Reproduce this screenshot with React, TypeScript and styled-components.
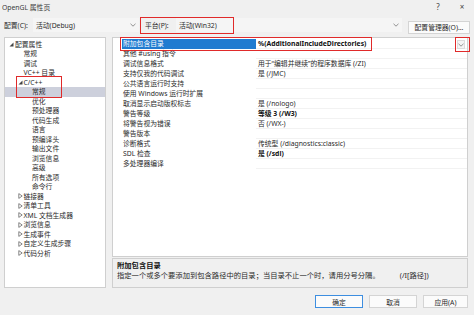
import styled, { createGlobalStyle } from "styled-components";

const GlobalStyle = createGlobalStyle`
  html, body { margin: 0; padding: 0; }
  body {
    background: #f0f0f0;
    font-family: "Noto Sans", "Noto Sans CJK SC", sans-serif;
  }
`;

const Window = styled.div`
  width: 474px;
  height: 315px;
  background: #f0f0f0;
  color: #2a2a2a;
  font-size: 6.8px;
  display: flex;
  flex-direction: column;
  overflow: hidden;
`;

const TitleBar = styled.div`
  height: 13px;
  display: flex;
  align-items: center;
  padding-left: 2px;
`;

const Title = styled.div`
  flex: 1;
  color: #3a3a3a;
`;

const TitleButton = styled.div`
  width: 24px;
  text-align: center;
  font-size: 8px;
  color: #444;
`;

const ConfigRow = styled.div`
  margin-top: 4px;
  height: 16px;
  display: flex;
  align-items: center;
  padding-left: 4px;
`;

const Label = styled.span<{ $w: number }>`
  width: ${(p) => p.$w}px;
  flex: none;
`;

const Combo = styled.div<{ $w: number }>`
  width: ${(p) => p.$w}px;
  height: 14px;
  box-sizing: border-box;
  display: flex;
  align-items: center;
  justify-content: space-between;
  padding: 0 3px;
  background: #f5f5f5;
  flex: none;
`;

const Chevron = styled.svg`
  width: 6px;
  height: 4px;
`;

const PlatformGroup = styled.div`
  position: relative;
  display: flex;
  align-items: center;
  padding-left: 5px;
  margin-left: 1px;
`;

const RedFrame = styled.div<{ $l: number; $t: number; $w: number; $h: number }>`
  position: absolute;
  left: ${(p) => p.$l}px;
  top: ${(p) => p.$t}px;
  width: ${(p) => p.$w}px;
  height: ${(p) => p.$h}px;
  border: 1.5px solid #e02a2a;
  box-sizing: border-box;
  pointer-events: none;
  z-index: 2;
`;

const ManagerButton = styled.div`
  margin-left: 6px;
  margin-top: 4px;
  width: 62px;
  height: 13px;
  box-sizing: border-box;
  border: 1px solid #d4d4d4;
  background: #fbfbfb;
  display: flex;
  align-items: center;
  justify-content: center;
`;

const Body = styled.div`
  margin-top: 4px;
  height: 251px;
  display: flex;
  gap: 6px;
  padding-left: 4px;
`;

const Tree = styled.div`
  width: 102px;
  box-sizing: border-box;
  border: 1px solid #cfcfcf;
  background: #fff;
  padding-top: 1.5px;
`;

const TreeItem = styled.div<{ $level: number; $selected?: boolean }>`
  position: relative;
  height: 9.5px;
  line-height: 9.5px;
  display: flex;
  align-items: center;
  padding-left: ${(p) => 4 + p.$level * 8.5}px;
  background: ${(p) => (p.$selected ? "#cdd0dc" : "transparent")};
  white-space: nowrap;
`;

const Expander = styled.span`
  width: 6px;
  flex: none;
  display: flex;
  align-items: center;
`;

const RightColumn = styled.div`
  width: 356px;
  display: flex;
  flex-direction: column;
  gap: 1px;
`;

const Grid = styled.div`
  height: 220px;
  box-sizing: border-box;
  border: 1px solid #cfcfcf;
  background: #fff;
  padding-top: 1px;
`;

const Row = styled.div`
  position: relative;
  height: 10px;
  line-height: 10px;
  display: grid;
  grid-template-columns: 134px 1fr;
  padding-left: 9px;
  white-space: nowrap;
`;

const NameCell = styled.div<{ $selected?: boolean }>`
  padding-left: 1px;
  background: ${(p) => (p.$selected ? "#1f7bd0" : "transparent")};
  color: ${(p) => (p.$selected ? "#fff" : "inherit")};
`;

const ValueCell = styled.div<{ $bold?: boolean }>`
  padding-left: 2px;
  font-weight: ${(p) => (p.$bold ? 700 : 400)};
  color: ${(p) => (p.$bold ? "#111" : "inherit")};
  box-shadow: inset 0 -1px 0 #f2f2f2;
`;

const DropButton = styled.div`
  position: absolute;
  right: 2px;
  top: 1px;
  width: 8px;
  height: 9px;
  background: #f4f4f4;
  border: 1px solid #dcdcdc;
  box-sizing: border-box;
  display: flex;
  align-items: center;
  justify-content: center;
`;

const Description = styled.div`
  height: 30px;
  box-sizing: border-box;
  border: 1px solid #cfcfcf;
  background: #f0f0f0;
  padding: 2px 4px;
  font-size: 7.3px;
  line-height: 9.5px;
  white-space: nowrap;
`;

const DescTitle = styled.div`
  font-weight: 700;
  color: #111;
`;

const DescSwitch = styled.span`
  margin-left: 20px;
`;

const Footer = styled.div`
  flex: 1;
  display: flex;
  justify-content: flex-end;
  align-items: flex-start;
  gap: 6px;
  padding: 7px 6px 0 0;
`;

const DialogButton = styled.div<{ $w: number; $default?: boolean }>`
  width: ${(p) => p.$w}px;
  height: 13px;
  box-sizing: border-box;
  border: 1px solid ${(p) => (p.$default ? "#3d8ee0" : "#d4d4d4")};
  background: #fbfbfb;
  display: flex;
  align-items: center;
  justify-content: center;
`;

const Down = () => (
  <Chevron viewBox="0 0 6 4">
    <path d="M0.5 0.8 L3 3.2 L5.5 0.8" fill="none" stroke="#777" strokeWidth="0.8" />
  </Chevron>
);

const Open = () => (
  <svg width="5" height="5" viewBox="0 0 5 5">
    <path d="M4.5 0.5 L4.5 4.5 L0.5 4.5 Z" fill="#444" />
  </svg>
);

const Closed = () => (
  <svg width="5" height="6" viewBox="0 0 5 6">
    <path d="M0.8 0.6 L4.2 3 L0.8 5.4 Z" fill="none" stroke="#555" strokeWidth="0.7" />
  </svg>
);

type Node = { text: string; level: number; exp?: "open" | "closed"; selected?: boolean; frame?: boolean };

const treeNodes: Node[] = [
  { text: "配置属性", level: 0, exp: "open" },
  { text: "常规", level: 1 },
  { text: "调试", level: 1 },
  { text: "VC++ 目录", level: 1 },
  { text: "C/C++", level: 1, exp: "open", frame: true },
  { text: "常规", level: 2, selected: true },
  { text: "优化", level: 2 },
  { text: "预处理器", level: 2 },
  { text: "代码生成", level: 2 },
  { text: "语言", level: 2 },
  { text: "预编译头", level: 2 },
  { text: "输出文件", level: 2 },
  { text: "浏览信息", level: 2 },
  { text: "高级", level: 2 },
  { text: "所有选项", level: 2 },
  { text: "命令行", level: 2 },
  { text: "链接器", level: 1, exp: "closed" },
  { text: "清单工具", level: 1, exp: "closed" },
  { text: "XML 文档生成器", level: 1, exp: "closed" },
  { text: "浏览信息", level: 1, exp: "closed" },
  { text: "生成事件", level: 1, exp: "closed" },
  { text: "自定义生成步骤", level: 1, exp: "closed" },
  { text: "代码分析", level: 1, exp: "closed" },
];

const props: { name: string; value: string; bold?: boolean }[] = [
  { name: "附加包含目录", value: "%(AdditionalIncludeDirectories)", bold: true },
  { name: "其他 #using 指令", value: "" },
  { name: "调试信息格式", value: "用于“编辑并继续”的程序数据库 (/ZI)" },
  { name: "支持仅我的代码调试", value: "是 (/JMC)" },
  { name: "公共语言运行时支持", value: "" },
  { name: "使用 Windows 运行时扩展", value: "" },
  { name: "取消显示启动版权标志", value: "是 (/nologo)" },
  { name: "警告等级", value: "等级 3 (/W3)", bold: true },
  { name: "将警告视为错误", value: "否 (/WX-)" },
  { name: "警告版本", value: "" },
  { name: "诊断格式", value: "传统型 (/diagnostics:classic)" },
  { name: "SDL 检查", value: "是 (/sdl)", bold: true },
  { name: "多处理器编译", value: "" },
];

const App = () => {
  return (
    <Window>
      <GlobalStyle />
      <TitleBar>
        <Title>OpenGL 属性页</Title>
        <TitleButton>?</TitleButton>
        <TitleButton>×</TitleButton>
      </TitleBar>

      <ConfigRow>
        <Label $w={29}>配置(C):</Label>
        <Combo $w={106}>
          <span>活动(Debug)</span>
          <Down />
        </Combo>
        <PlatformGroup>
          <Label $w={31}>平台(P):</Label>
          <Combo $w={226}>
            <span>活动(Win32)</span>
            <Down />
          </Combo>
          <RedFrame $l={0} $t={-1} $w={94} $h={17} />
        </PlatformGroup>
        <ManagerButton>配置管理器(O)...</ManagerButton>
      </ConfigRow>

      <Body>
        <Tree>
          {treeNodes.map((n, i) => (
            <TreeItem key={i} $level={n.level} $selected={n.selected}>
              <Expander>
                {n.exp === "open" && <Open />}
                {n.exp === "closed" && <Closed />}
              </Expander>
              {n.text}
              {n.frame && <RedFrame $l={11} $t={-1.5} $w={46} $h={22} />}
            </TreeItem>
          ))}
        </Tree>

        <RightColumn>
          <Grid>
            {props.map((p, i) => (
              <Row key={i}>
                <NameCell $selected={i === 0}>{p.name}</NameCell>
                <ValueCell $bold={p.bold}>{p.value}</ValueCell>
                {i === 0 && (
                  <>
                    <RedFrame $l={7} $t={-2.5} $w={252} $h={14.5} />
                    <DropButton>
                      <Down />
                    </DropButton>
                    <RedFrame $l={342} $t={-2} $w={15} $h={15} />
                  </>
                )}
              </Row>
            ))}
          </Grid>
          <Description>
            <DescTitle>附加包含目录</DescTitle>
            <div>
              指定一个或多个要添加到包含路径中的目录；当目录不止一个时，请用分号分隔。
              <DescSwitch>(/I[路径])</DescSwitch>
            </div>
          </Description>
        </RightColumn>
      </Body>

      <Footer>
        <DialogButton $w={48} $default>确定</DialogButton>
        <DialogButton $w={48}>取消</DialogButton>
        <DialogButton $w={45}>应用(A)</DialogButton>
      </Footer>
    </Window>
  );
};

export default App;
